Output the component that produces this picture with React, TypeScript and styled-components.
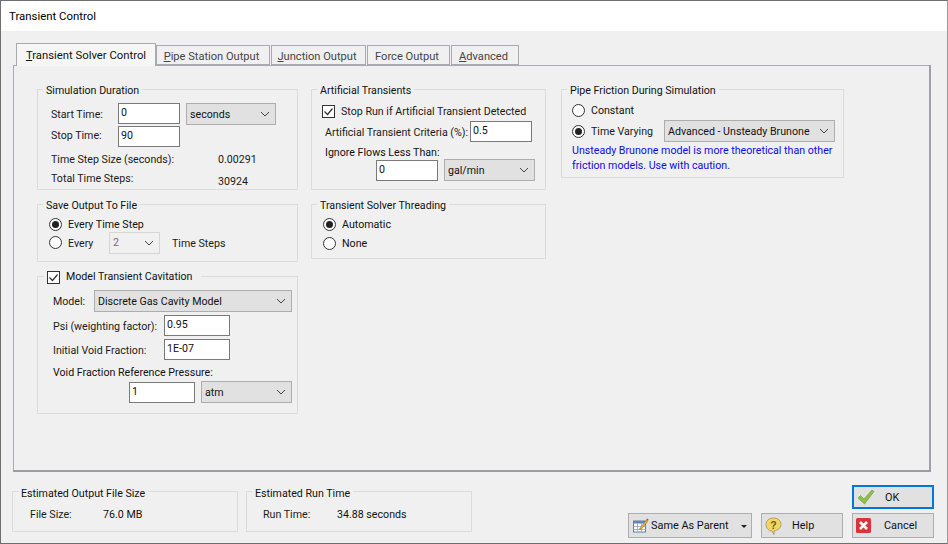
import React from "react";
import styled, { createGlobalStyle } from "styled-components";

const Global = createGlobalStyle`
  html, body { margin: 0; padding: 0; background: #f0f0f0; }
  * { box-sizing: border-box; }
  body { font-family: Roboto, "Noto Sans", "Liberation Sans", sans-serif; font-size: 10.65px; color: #111; }
`;

const Dialog = styled.div`
  width: 948px; height: 544px; background: #f0f0f0; overflow: hidden;
  border: 1px solid #6e6e6e; border-right-color: #9a9a9a;
  display: flex; flex-direction: column;
`;
const TitleBar = styled.div`
  height: 30px; background: #fff; padding: 0 0 0 8px; display: flex; align-items: center;
  font-size: 11.4px; color: #000;
`;
const Tabs = styled.div`
  display: flex; align-items: flex-end; height: 34px; padding-left: 15px; position: relative; z-index: 1;
`;
const Tab = styled.div<{ $active?: boolean; $w: number }>`
  height: ${p => (p.$active ? "23px" : "20px")};
  width: ${p => p.$w}px;
  margin-bottom: ${p => (p.$active ? "-1px" : "0")};
  background: ${p => (p.$active ? "#f6f6f6" : "#f0f0f0")};
  border: 1px solid #a9a9b0; border-bottom: ${p => (p.$active ? "none" : "1px solid #a9a9b0")};
  margin-right: ${p => (p.$active ? "0" : "1px")};
  padding: ${p => (p.$active ? "0" : "2px 3px 0 0")};
  display: flex; align-items: center; justify-content: center;
  color: ${p => (p.$active ? "#111" : "#444")};
  font-size: ${p => (p.$active ? "11.3px" : "11.1px")};
  white-space: nowrap;
`;
const TabPanel = styled.div`
  width: 918px; height: 407px; margin-left: 12px;
  border: 1px solid #a9a9b0; border-right: 2px solid #a0a0a8; border-bottom: 2px solid #9c9ca4;
  padding: 23px 0 0 23px; display: flex; align-items: flex-start;
`;
const Column = styled.div<{ $w: number; $mr: number }>`
  width: ${p => p.$w}px; margin-right: ${p => p.$mr}px;
  display: flex; flex-direction: column; gap: 14px;
`;
const Group = styled.div<{ $h: number; $pt?: number; $pl?: number }>`
  position: relative; height: ${p => p.$h}px;
  border: 1px solid #dcdcdc;
  padding: ${p => p.$pt ?? 12}px 0 0 ${p => p.$pl ?? 10}px;
`;
const Legend = styled.div<{ $top?: number; $left?: number }>`
  position: absolute; top: ${p => p.$top ?? -6}px; left: ${p => p.$left ?? 5}px; padding: 0 3px; background: #f0f0f0;
  line-height: 14px; white-space: nowrap; display: flex; align-items: center; gap: 6px;
`;
const Row = styled.div<{ $h: number; $mt?: number; $ml?: number }>`
  display: flex; align-items: center; height: ${p => p.$h}px;
  margin-top: ${p => p.$mt ?? 0}px; margin-left: ${p => p.$ml ?? 0}px;
  white-space: nowrap;
`;
const Label = styled.span<{ $w?: number; $ml?: number; $mt?: number; $mb?: number }>`
  display: inline-block; width: ${p => (p.$w ? `${p.$w}px` : "auto")}; flex: none;
  margin: ${p => p.$mt ?? 0}px 0 ${p => p.$mb ?? 0}px ${p => p.$ml ?? 0}px;
  color: #1a1a1a;
`;
const TextBox = styled.div<{ $w: number; $mr?: number; $end?: boolean }>`
  width: ${p => p.$w}px; height: 21px; flex: none; background: #fff; border: 1px solid #7a7a7a;
  align-self: ${p => (p.$end ? "flex-start" : "auto")};
  padding: 0 0 2px 2px; margin-right: ${p => p.$mr ?? 0}px; display: flex; align-items: center;
`;
const SelectBox = styled.div<{ $w: number; $disabled?: boolean }>`
  width: ${p => p.$w}px; height: 22px; flex: none;
  background: ${p => (p.$disabled ? "#f0f0f0" : "#e1e1e1")};
  border: 1px solid ${p => (p.$disabled ? "#d6d6d6" : "#adadad")};
  padding: 0 5px 0 3px; display: flex; align-items: center; justify-content: space-between;
  color: ${p => (p.$disabled ? "#6d6d6d" : "#111")}; white-space: nowrap;
`;
const Mark = styled.span<{ $mr?: number }>`
  display: inline-flex; flex: none; margin-right: ${p => p.$mr ?? 6}px;
`;
const Blue = styled.div`
  color: #0a0af0; line-height: 15px; margin-top: 1px; white-space: nowrap;
`;
const Footer = styled.div`
  flex: 1; display: flex; justify-content: space-between; padding: 13px 13px 0 11px;
`;
const Estimates = styled.div`
  display: flex; gap: 8px; padding-top: 6px;
`;
const Estimate = styled(Group)`
  width: 226px;
`;
const Actions = styled.div`
  display: grid; grid-template-columns: 124px 82px 82px; grid-template-rows: 24px 25px; column-gap: 9px; row-gap: 4px;
`;
const Button = styled.div<{ $primary?: boolean; $col: number; $row: number; $pad?: number }>`
  grid-column: ${p => p.$col}; grid-row: ${p => p.$row};
  background: #e1e1e1; border: ${p => (p.$primary ? "2px solid #0078d7" : "1px solid #adadad")};
  display: flex; align-items: center; padding-left: ${p => p.$pad ?? 3}px; position: relative; color: #111;
  font-size: 10.9px; white-space: nowrap;
`;
const ButtonText = styled.span<{ $ml: number }>`
  margin-left: ${p => p.$ml}px;
`;

const Chevron = () => (
  <svg width="10" height="6" viewBox="0 0 10 6"><path d="M1 1l4 4 4-4" fill="none" stroke="#444" strokeWidth="1" /></svg>
);
const Select = ({ w, children, disabled }: { w: number; children: React.ReactNode; disabled?: boolean }) => (
  <SelectBox $w={w} $disabled={disabled}>
    <span>{children}</span>
    <Chevron />
  </SelectBox>
);
const Radio = ({ on }: { on?: boolean }) => (
  <Mark>
    <svg width="13" height="13" viewBox="0 0 13 13">
      <circle cx="6.5" cy="6.5" r="6" fill="#fff" stroke="#333" />
      {on && <circle cx="6.5" cy="6.5" r="3.5" fill="#222" />}
    </svg>
  </Mark>
);
const Check = () => (
  <Mark $mr={0}>
    <svg width="13" height="13" viewBox="0 0 13 13">
      <rect x=".5" y=".5" width="12" height="12" fill="#fff" stroke="#333" />
      <path d="M2.500 6.500l3 3 5-6" fill="none" stroke="#333" strokeWidth="1.2" />
    </svg>
  </Mark>
);

const OkIcon = () => (
  <svg width="18" height="16" viewBox="0 0 18 16">
    <path d="M1 9l2.500-2.500L7 10l8-9 2 1.500L7.500 15z" fill="#8cc04a" stroke="#6a9a30" strokeWidth=".6" />
  </svg>
);
const CancelIcon = () => (
  <svg width="15" height="15" viewBox="0 0 15 15">
    <rect width="15" height="15" rx="1.5" fill="#d8343a" />
    <path d="M4 4l7 7M11 4l-7 7" stroke="#fff" strokeWidth="2.6" />
  </svg>
);
const HelpIcon = () => (
  <svg width="17" height="18" viewBox="0 0 17 18">
    <path d="M8.500 1C4 1 1 3.800 1 7.500S4 14 7 14l2 3.500V14c3.500-.5 7-2.800 7-6.500S13 1 8.500 1z" fill="#f4d65e" stroke="#a09060" strokeWidth=".8" />
    <text x="8.500" y="11.500" textAnchor="middle" fontSize="10.500" fontWeight="700" fill="#6a5a20" fontFamily="Liberation Sans, sans-serif">?</text>
  </svg>
);
const ParentIcon = () => (
  <svg width="16" height="15" viewBox="0 0 16 15">
    <rect x=".5" y="3" width="12" height="11" fill="#fff" stroke="#5f7fa8" />
    <rect x=".5" y="3" width="12" height="2.500" fill="#5f85c0" />
    <path d="M.5 8.500h12M.5 11.500h12M4.500 5v9M8.500 5v9" stroke="#8da7c8" strokeWidth=".8" />
    <path d="M7 10l6.500-8 1.500 1.200L8.500 11 6.500 11.500z" fill="#e9a83a" stroke="#8a5a20" strokeWidth=".4" />
    <path d="M13.300 1.500l.8-1 1.500 1.200-.7 1z" fill="#d8343a" />
  </svg>
);
const Caret = styled.span`
  position: absolute; right: 4px; top: 11px; width: 0; height: 0;
  border-left: 3px solid transparent; border-right: 3px solid transparent; border-top: 3px solid #222;
`;

export default function App() {
  return (
    <>
      <Global />
      <Dialog>
        <TitleBar>Transient Control</TitleBar>
        <Tabs>
          <Tab $active $w={140}><span><u>T</u>ransient Solver Control</span></Tab>
          <Tab $w={114}><span><u>P</u>ipe Station Output</span></Tab>
          <Tab $w={95}><span><u>J</u>unction Output</span></Tab>
          <Tab $w={83}><span>Force Output</span></Tab>
          <Tab $w={68}><span><u>A</u>dvanced</span></Tab>
        </Tabs>
        <TabPanel>
          <Column $w={261} $mr={13}>
            <Group $h={101} $pt={13} $pl={13}>
              <Legend>Simulation Duration</Legend>
              <Row $h={22}>
                <Label $w={67}>Start Time:</Label>
                <TextBox $w={62} $mr={6} $end>0</TextBox>
                <Select w={90}>seconds</Select>
              </Row>
              <Row $h={21} $mt={1}>
                <Label $w={67} $mb={2}>Stop Time:</Label>
                <TextBox $w={62}>90</TextBox>
              </Row>
              <Row $h={14} $mt={5}>
                <Label $w={167}>Time Step Size (seconds):</Label>
                <Label>0.00291</Label>
              </Row>
              <Row $h={16} $mt={4}>
                <Label $w={167}>Total Time Steps:</Label>
                <Label $mt={6}>30924</Label>
              </Row>
            </Group>
            <Group $h={58} $pt={12} $pl={11}>
              <Legend>Save Output To File</Legend>
              <Row $h={14}><Radio on />Every Time Step</Row>
              <Row $h={21} $mt={1}>
                <Radio />
                <Label $w={41} $mt={2}>Every</Label>
                <Select w={51} disabled>2</Select>
                <Label $ml={12} $mt={2}>Time Steps</Label>
              </Row>
            </Group>
            <Group $h={138} $pt={13} $pl={15}>
              <Legend $top={-7} $left={6}><Check />Model Transient Cavitation&nbsp;&nbsp;</Legend>
              <Row $h={22}>
                <Label $w={41}>Model:</Label>
                <Select w={198}>Discrete Gas Cavity Model</Select>
              </Row>
              <Row $h={21} $mt={3}>
                <Label $w={111} $mt={2}>Psi (weighting factor):</Label>
                <TextBox $w={66}>0.95</TextBox>
              </Row>
              <Row $h={21} $mt={3}>
                <Label $w={111} $mt={2}>Initial Void Fraction:</Label>
                <TextBox $w={66}>1E-07</TextBox>
              </Row>
              <Row $h={15} $mt={5}>Void Fraction Reference Pressure:</Row>
              <Row $h={22} $mt={1} $ml={76}>
                <TextBox $w={66} $mr={6}>1</TextBox>
                <Select w={91}>atm</Select>
              </Row>
            </Group>
          </Column>
          <Column $w={235} $mr={15}>
            <Group $h={101} $pt={14} $pl={10}>
              <Legend>Artificial Transients</Legend>
              <Row $h={14}><Check /><Label $ml={6}>Stop Run if Artificial Transient Detected</Label></Row>
              <Row $h={21} $mt={3} $ml={3}>
                <Label $w={145} $mt={2}>Artificial Transient Criteria (%):</Label>
                <TextBox $w={62}>0.5</TextBox>
              </Row>
              <Row $h={14} $mt={3} $ml={3}>Ignore Flows Less Than:</Row>
              <Row $h={22} $mt={0} $ml={54}>
                <TextBox $w={62} $mr={6}>0</TextBox>
                <Select w={91}>gal/min</Select>
              </Row>
            </Group>
            <Group $h={55} $pt={12} $pl={11}>
              <Legend>Transient Solver Threading</Legend>
              <Row $h={14}><Radio on />Automatic</Row>
              <Row $h={14} $mt={5}><Radio />None</Row>
            </Group>
          </Column>
          <Column $w={283} $mr={0}>
            <Group $h={89} $pt={13} $pl={10}>
              <Legend>Pipe Friction During Simulation</Legend>
              <Row $h={14}><Radio />Constant</Row>
              <Row $h={22} $mt={3}>
                <Radio on />
                <Label $w={73}>Time Varying</Label>
                <Select w={171}>Advanced - Unsteady Brunone</Select>
              </Row>
              <Blue>
                Unsteady Brunone model is more theoretical than other<br />
                friction models. Use with caution.
              </Blue>
            </Group>
          </Column>
        </TabPanel>
        <Footer>
          <Estimates>
            <Estimate $h={41} $pt={15} $pl={17}>
              <Legend $top={-5}>Estimated Output File Size</Legend>
              <Row $h={14}><Label $w={73}>File Size:</Label>76.0 MB</Row>
            </Estimate>
            <Estimate $h={41} $pt={15} $pl={16}>
              <Legend $top={-5}>Estimated Run Time</Legend>
              <Row $h={14}><Label $w={74}>Run Time:</Label>34.88 seconds</Row>
            </Estimate>
          </Estimates>
          <Actions>
            <Button $primary $col={3} $row={1}><OkIcon /><ButtonText $ml={10}>OK</ButtonText></Button>
            <Button $col={1} $row={2} $pad={4}><ParentIcon /><ButtonText $ml={2}>Same As Parent</ButtonText><Caret /></Button>
            <Button $col={2} $row={2}><HelpIcon /><ButtonText $ml={10}>Help</ButtonText></Button>
            <Button $col={3} $row={2}><CancelIcon /><ButtonText $ml={13}>Cancel</ButtonText></Button>
          </Actions>
        </Footer>
      </Dialog>
    </>
  );
}
